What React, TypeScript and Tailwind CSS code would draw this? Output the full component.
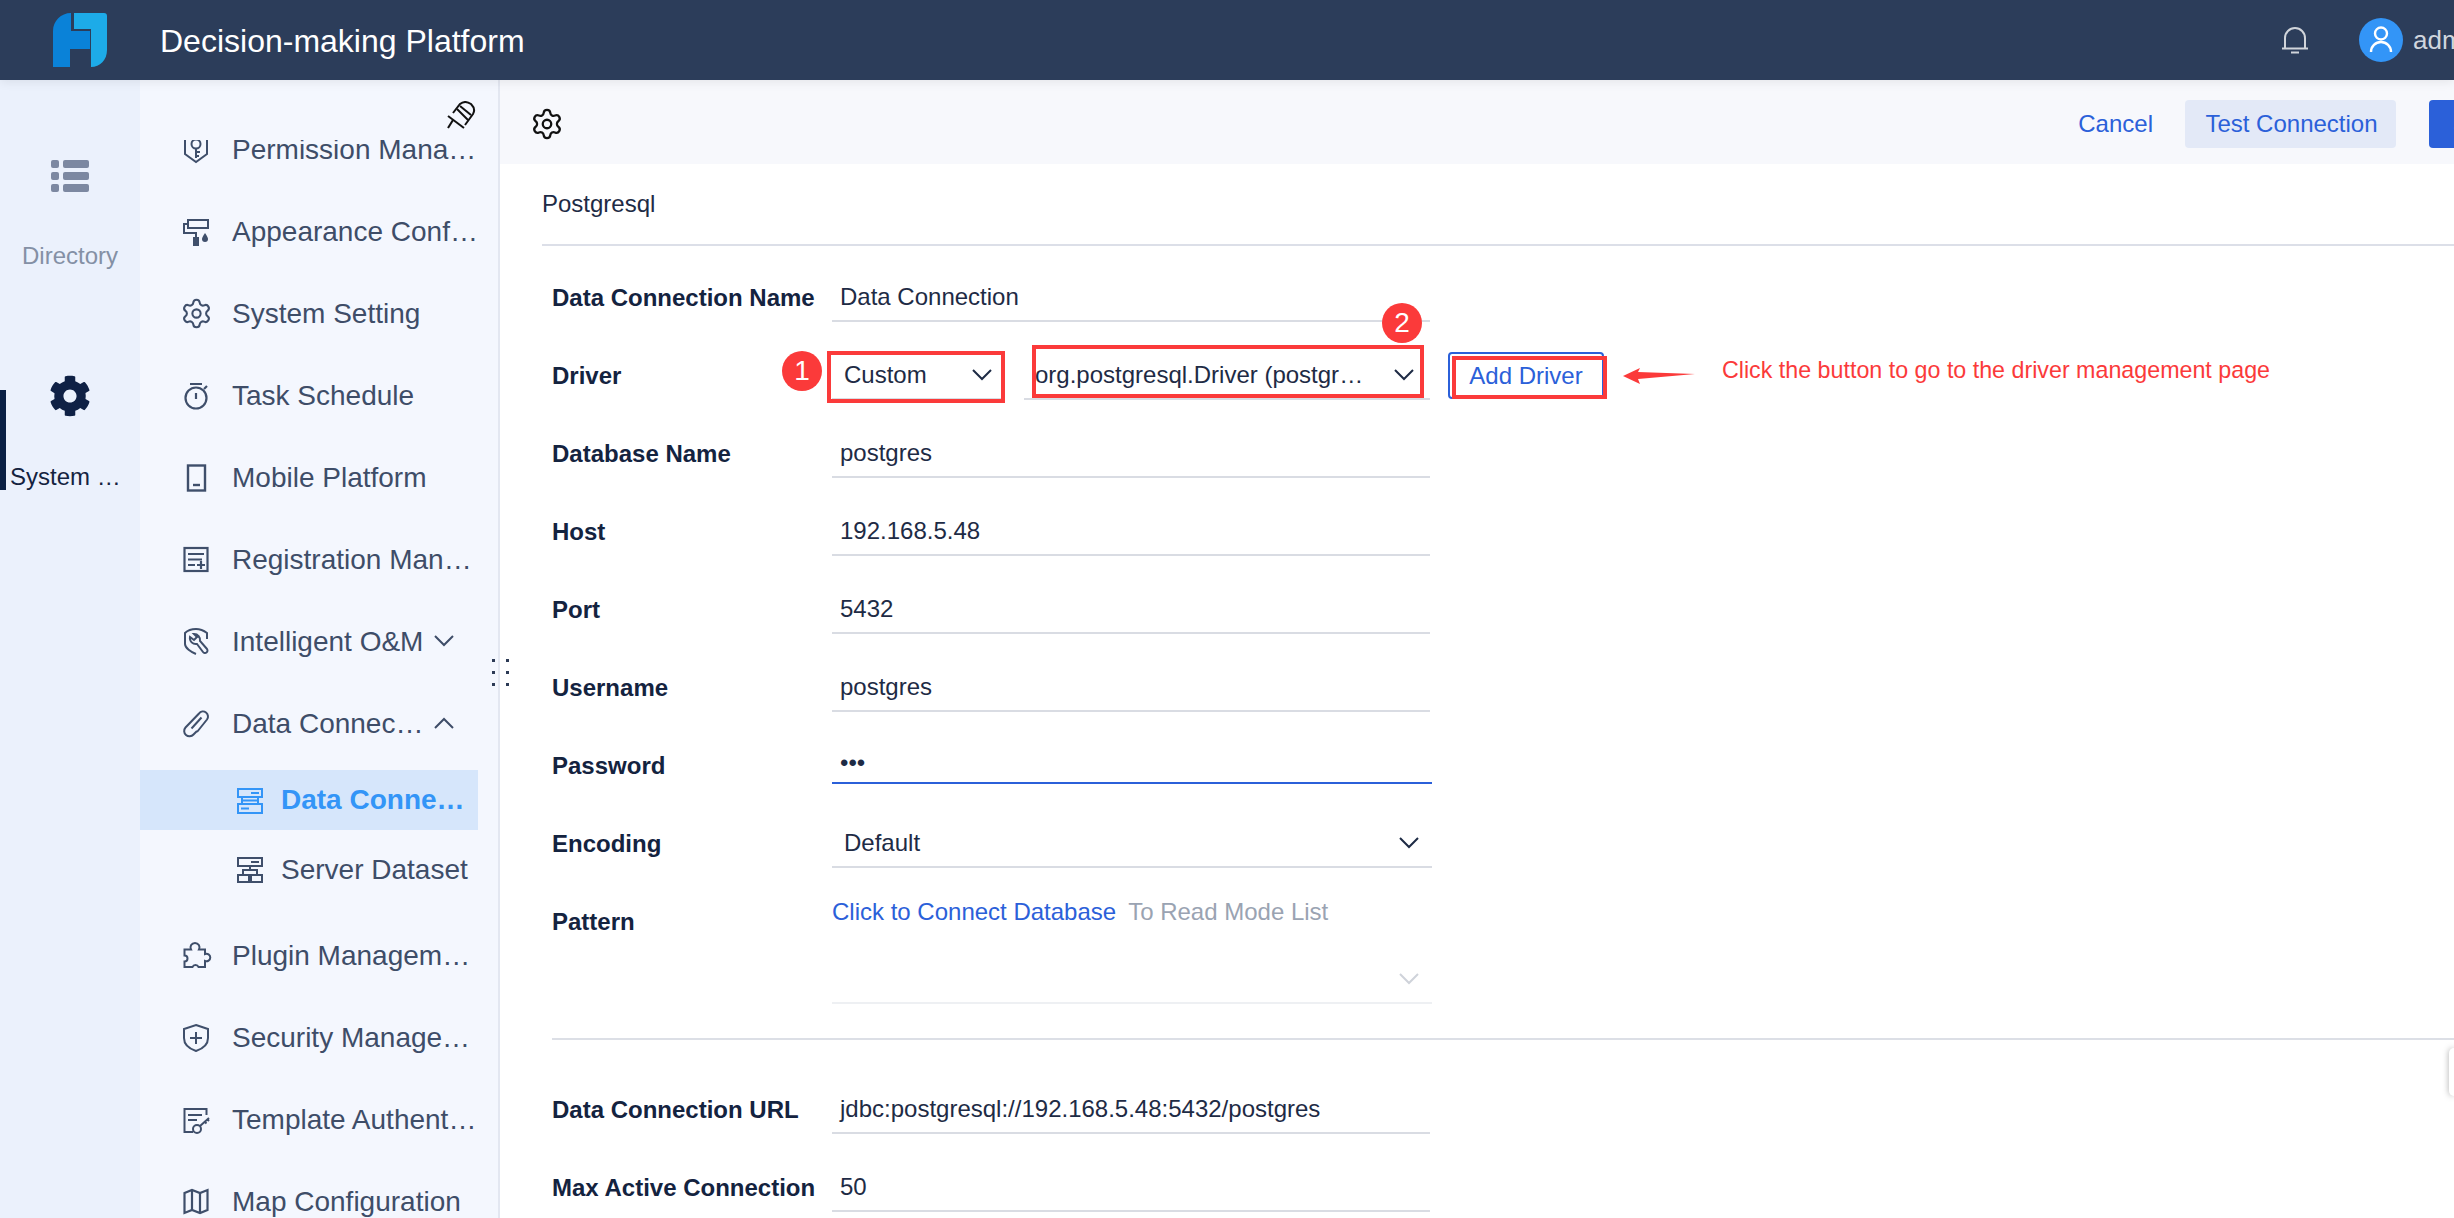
import React from "react";
import { Settings } from "lucide-react";
import { FaCog } from "react-icons/fa";

const S = "#3f4f6b";

const Svg = ({ children, c = S, sw = 2 }: { children: React.ReactNode; c?: string; sw?: number }) => (
  <svg width="26" height="26" viewBox="0 0 26 26" fill="none" stroke={c} strokeWidth={sw} className="shrink-0 overflow-visible">
    {children}
  </svg>
);

const ShieldKey = () => (
  <Svg>
    <path d="M2 0V18L13 26L24 18V0" />
    <circle cx="13" cy="8" r="4.5" />
    <path d="M13 12.5V22M13 16H17M13 20H16" />
  </Svg>
);
const Roller = () => (
  <Svg>
    <rect x="5" y="2" width="20" height="8" />
    <path d="M5 6H1V15H13V19" />
    <rect x="10" y="19" width="6" height="9" fill={S} stroke="none" />
    <path d="M22 15C20 18 19 20 19 21a3 3 0 0 0 6 0c0-1-1-3-3-6z" fill={S} stroke="none" />
  </Svg>
);
const Gear = () => <Settings size={33} color={S} strokeWidth={1.5} className="-mx-[3.5px] shrink-0" />;
const Stopwatch = () => (
  <Svg sw={2.2}>
    <circle cx="13" cy="16" r="10.5" />
    <path d="M7 2H19M21 7L24 4M13 11V17" />
  </Svg>
);
const Phone = () => (
  <Svg sw={2.4}>
    <rect x="5" y="1.5" width="17" height="25" />
    <path d="M10 21H17" />
  </Svg>
);
const RegForm = () => (
  <Svg sw={2.2}>
    <rect x="1.5" y="2" width="23" height="23" />
    <path d="M5 8H21M5 13.5H19M5 19H12M14 19H22M18 15V23" />
  </Svg>
);
const WrenchShield = () => (
  <Svg>
    <path d="M24 11V5C20 2 16 1 13 1C9 1 5 2 2 5V16C2 20 8 24 13 26" />
    <path d="M7 9a6 6 0 0 0 7 7L20 24a2.2 2.2 0 0 0 4-3L17 13a6 6 0 0 0-6-7l3 3-3 3z" />
  </Svg>
);
const Clip = () => (
  <Svg>
    <path d="M14 22L24 9.500a4.800 4.800 0 0 0-8-6L2.500 17.500a5.200 5.200 0 0 0 8 7L14 21" />
    <path d="M8.500 18.500L18.500 7.500" />
  </Svg>
);
const Plug = () => (
  <Svg>
    <path d="M1.500 7.500H8a4.500 4.500 0 1 1 8 0H22V12a3.800 3.800 0 1 1 0 7V25H15.500a3.200 3.200 0 0 0-6 0H1.500V19.500a3 3 0 0 0 0-6Z" />
  </Svg>
);
const ShieldPlus = () => (
  <Svg>
    <path d="M13 1L25 5V14C25 21 19 25 13 27C7 25 1 21 1 14V5Z" />
    <path d="M13 8V20M7 14H19" />
  </Svg>
);
const TemplateKey = () => (
  <Svg>
    <path d="M23.500 9V3H1.500V26H10" />
    <path d="M5 9H19M5 14H14" />
    <circle cx="14" cy="23" r="4" />
    <path d="M17 20L26 12M21.500 15.500L23.500 17.500M24 13L26 15" />
  </Svg>
);
const MapIcon = () => (
  <Svg sw={2.2}>
    <path d="M1.500 5L9 2L17 5L24.500 2V22L17 25L9 22L1.500 25Z" />
    <path d="M9 2V22M17 5V25" />
  </Svg>
);
const ConnIcon = () => (
  <Svg c="#3395f7">
    <rect x="1" y="2" width="24" height="8" />
    <path d="M14 6H22" />
    <path d="M5 10V17M21 10V17" />
    <path d="M5 13.500H21" />
    <rect x="1" y="17" width="24" height="9" />
    <path d="M4 21.500H12" />
  </Svg>
);
const DatasetIcon = () => (
  <Svg>
    <rect x="1" y="2" width="24" height="8" />
    <path d="M14 6H22M13 10V14M6 19V14H20V19" />
    <rect x="1" y="19" width="11" height="7" />
    <rect x="14" y="19" width="11" height="7" />
  </Svg>
);

const Chevron = ({ up = false, c = "#1e2b45" }: { up?: boolean; c?: string }) => (
  <svg width="20" height="12" viewBox="0 0 20 12" fill="none" stroke={c} strokeWidth="2" className="shrink-0">
    <path d={up ? "M1 11L10 2L19 11" : "M1 1L10 10L19 1"} />
  </svg>
);

const MenuRow = ({ icon, text }: { icon: React.ReactNode; text: string }) => (
  <div className="flex h-[82px] items-center gap-[23px] pl-[43px]">
    {icon}
    <span className="w-[246px] truncate pt-[2px] text-[28px] text-[#3e4d68]">{text}</span>
  </div>
);

const PinIcon = () => (
  <svg width="29" height="30" viewBox="0 0 29 30" fill="none" stroke="#111" strokeWidth="2" className="shrink-0">
    <path d="M1 15L17 27" />
    <path d="M6 19L1 27" />
    <path d="M6 12L13 3Q18-1 24 3Q29 8 26 13L18 24" />
    <path d="M13 5L24 14" />
    <path d="M10 8L21 19" />
  </svg>
);

const Sidebar = () => (
  <aside className="flex h-full w-[360px] shrink-0 flex-col border-r-2 border-[#e3e7f1] bg-[#f4f7fe]">
    <div className="flex h-[60px] shrink-0 justify-end pr-[22px] pt-[21px]">
      <PinIcon />
    </div>
    <div className="flex-1 overflow-hidden">
      <div className="-mt-[32px]">
        <MenuRow icon={<ShieldKey />} text="Permission Management" />
        <MenuRow icon={<Roller />} text="Appearance Configuration" />
        <MenuRow icon={<Gear />} text="System Setting" />
        <MenuRow icon={<Stopwatch />} text="Task Schedule" />
        <MenuRow icon={<Phone />} text="Mobile Platform" />
        <MenuRow icon={<RegForm />} text="Registration Management" />
        <div className="flex h-[82px] items-center gap-[23px] pl-[43px]">
          <WrenchShield />
          <span className="w-[192px] truncate pt-[2px] text-[28px] text-[#3e4d68]">Intelligent O&amp;M</span>
          <span className="-ml-[13px]"><Chevron c="#3e4d68" /></span>
        </div>
        <div className="flex h-[82px] items-center gap-[23px] pl-[43px]">
          <Clip />
          <span className="w-[192px] truncate pt-[2px] text-[28px] text-[#3e4d68]">Data Connection</span>
          <span className="-ml-[13px]"><Chevron up c="#3e4d68" /></span>
        </div>
        <div className="mt-[6px] flex h-[60px] w-[338px] items-center gap-[18px] bg-[#d6e6fb] pl-[97px]">
          <ConnIcon />
          <span className="w-[186px] truncate text-[28px] font-bold text-[#3395f7]">Data Connection</span>
        </div>
        <div className="flex h-[78px] items-center gap-[18px] pl-[97px]">
          <DatasetIcon />
          <span className="w-[192px] truncate pt-[2px] text-[28px] text-[#3e4d68]">Server Dataset</span>
        </div>
        <div className="mt-[6px]">
          <MenuRow icon={<Plug />} text="Plugin Management" />
          <MenuRow icon={<ShieldPlus />} text="Security Management" />
          <MenuRow icon={<TemplateKey />} text="Template Authentication" />
          <MenuRow icon={<MapIcon />} text="Map Configuration" />
        </div>
      </div>
    </div>
  </aside>
);

const Rail = () => (
  <aside className="relative flex h-full w-[140px] shrink-0 flex-col items-center bg-[#ebf1fc] pt-[80px]">
    <svg width="38" height="32" viewBox="0 0 38 32" fill="#7c88a1" className="shrink-0">
      <rect x="0" y="0" width="8" height="8" rx="2" />
      <rect x="12" y="0" width="26" height="8" rx="2" />
      <rect x="0" y="12" width="8" height="8" rx="2" />
      <rect x="12" y="12" width="26" height="8" rx="2" />
      <rect x="0" y="24" width="8" height="8" rx="2" />
      <rect x="12" y="24" width="26" height="8" rx="2" />
    </svg>
    <div className="mt-[50px] text-[24px] leading-[28px] text-[#8490a5]">Directory</div>
    <FaCog size={42} color="#0f2145" className="mt-[105px] shrink-0" />
    <div className="ml-[10px] mt-[46px] w-[111px] self-start truncate text-[24px] leading-[28px] text-[#14233f]">System Management</div>
    <div className="absolute left-0 top-[310px] h-[100px] w-[6px] bg-[#0a1f44]" />
  </aside>
);

const Label = ({ children, pad = "pt-[2px]" }: { children: React.ReactNode; pad?: string }) => (
  <div className={`w-[280px] shrink-0 text-[24px] font-bold text-[#14233f] ${pad}`}>{children}</div>
);

const Field = ({ label, value }: { label: string; value: string }) => (
  <div className="mb-[28px] flex h-[50px] items-center">
    <Label>{label}</Label>
    <div className="flex h-[50px] w-[598px] items-center border-b-2 border-[#d9dce3] pl-[8px] pt-[2px] text-[24px] text-[#1e2b45]">{value}</div>
  </div>
);

const Header = () => (
  <header className="relative z-10 flex h-[80px] shrink-0 items-center bg-[#2c3d5a] pl-[53px] shadow-[0_2px_10px_rgba(0,0,0,0.08)]">
    <svg width="56" height="56" viewBox="53 12 56 56" className="shrink-0">
      <path d="M53 31C53 21 61 13 71 13V31H90V49H70V67H53Z" fill="#0a82d8" />
      <path d="M74 13H104Q107 13 107 16V50C107 60 100 67 91 67V29H74Z" fill="#1dabe8" />
    </svg>
    <div className="ml-[51px] pt-[1px] text-[32px] text-white">Decision-making Platform</div>
    <div className="ml-auto flex items-center">
      <svg width="26" height="28" viewBox="0 0 26 28" fill="none" stroke="#d0d4da" strokeWidth="2" className="shrink-0">
        <path d="M3 22V12a10 10 0 0 1 20 0V22" />
        <path d="M0 22.500H26M9 26.500H17" />
      </svg>
      <div className="ml-[51px] flex h-[44px] w-[44px] shrink-0 items-center justify-center rounded-full bg-[#3395f7]">
        <svg width="24" height="28" viewBox="0 0 24 28" fill="none" stroke="#fff" strokeWidth="2.400">
          <circle cx="12" cy="7.500" r="6" />
          <path d="M2 26a10 10 0 0 1 20 0" />
        </svg>
      </div>
      <div className="ml-[10px] w-[41px] overflow-hidden whitespace-nowrap text-[26px] text-[#d0d6de]">admin</div>
    </div>
  </header>
);

const Toolbar = () => (
  <div className="flex h-[84px] shrink-0 items-start bg-[#f7f8fc] pl-[30px] pt-[20px]">
    <div className="flex h-[48px] items-center">
      <Settings size={34} color="#111" strokeWidth={1.6} />
    </div>
    <div className="ml-auto flex items-center text-[24px]">
      <span className="text-[#2b60d9]">Cancel</span>
      <div className="ml-[32px] flex h-[48px] w-[211px] items-center justify-center rounded-[4px] bg-[#e3e9f7] pl-[2px] text-[#2b60d9]">Test Connection</div>
      <div className="ml-[33px] flex h-[48px] w-[25px] items-center overflow-hidden whitespace-nowrap rounded-l-[4px] bg-[#2b60d9] pl-[24px] text-white">Save</div>
    </div>
  </div>
);

const Form = () => (
  <div className="pl-[52px] pt-[26px]">
    <Field label="Data Connection Name" value="Data Connection" />
    <div className="mb-[28px] flex h-[50px] items-center">
      <Label>Driver</Label>
      <div className="flex h-[50px] w-[170px] items-center justify-between border-b-2 border-[#d9dce3] pl-[12px] pr-[10px] pt-[2px] text-[24px] text-[#1e2b45]">
        Custom
        <Chevron />
      </div>
      <div className="ml-[22px] flex h-[50px] w-[406px] items-center justify-between border-b-2 border-[#d9dce3] pl-[11px] pr-[16px] pt-[2px] text-[24px] text-[#1e2b45]">
        <span className="w-[331px] truncate">org.postgresql.Driver (postgresql-42.2.5.jar)</span>
        <Chevron />
      </div>
      <div className="ml-[18px] flex h-[47px] w-[156px] items-center justify-center rounded-[4px] border-2 border-[#2b60d9] pt-[2px] text-[24px] text-[#2b60d9]">Add Driver</div>
    </div>
    <Field label="Database Name" value="postgres" />
    <Field label="Host" value="192.168.5.48" />
    <Field label="Port" value="5432" />
    <Field label="Username" value="postgres" />
    <div className="mb-[34px] flex h-[44px] items-center">
      <Label pad="pt-[8px]">Password</Label>
      <div className="flex h-[44px] w-[600px] items-center border-b-2 border-[#2b60d9] pl-[8px] pt-[4px] text-[24px] text-[#1e2b45]">•••</div>
    </div>
    <div className="mb-[28px] flex h-[50px] items-center">
      <Label>Encoding</Label>
      <div className="flex h-[50px] w-[600px] items-center justify-between border-b-2 border-[#d9dce3] pl-[12px] pr-[13px] pt-[2px] text-[24px] text-[#1e2b45]">
        Default
        <Chevron />
      </div>
    </div>
    <div className="flex h-[108px] items-start">
      <div className="flex h-[50px] items-center">
        <Label>Pattern</Label>
      </div>
      <div className="h-[108px] w-[600px] border-b-2 border-[#eef0f3]">
        <div className="flex h-[31px] items-center text-[24px]">
          <span className="text-[#2b60d9]">Click to Connect Database</span>
          <span className="ml-[12px] text-[#9aa3b2]">To Read Mode List</span>
        </div>
        <div className="mt-[46px] flex justify-end pr-[13px]">
          <Chevron c="#cfd3da" />
        </div>
      </div>
    </div>
    <div className="mb-[44px] mt-[34px] h-[2px] bg-[#dcdfe6]" />
    <Field label="Data Connection URL" value="jdbc:postgresql://192.168.5.48:5432/postgres" />
    <Field label="Max Active Connection" value="50" />
  </div>
);

const Annotations = () => (
  <>
    <div className="absolute left-[827px] top-[351px] h-[52px] w-[178px] border-[4px] border-[#fb3a3a]" />
    <div className="absolute left-[1032px] top-[345px] h-[53px] w-[392px] border-[4px] border-[#fb3a3a]" />
    <div className="absolute left-[1452px] top-[356px] h-[43px] w-[155px] border-[4px] border-[#fb3a3a]" />
    <div className="absolute left-[782px] top-[351px] flex h-[40px] w-[40px] items-center justify-center rounded-full bg-[#fb3a3a] text-[28px] text-white">1</div>
    <div className="absolute left-[1382px] top-[303px] flex h-[40px] w-[40px] items-center justify-center rounded-full bg-[#fb3a3a] text-[28px] text-white">2</div>
    <svg className="absolute left-[1620px] top-[365px]" width="80" height="22" viewBox="1620 365 80 22" fill="#fb3a3a">
      <polygon points="1623,376 1640,368 1638,372 1695,374 1638,379 1640,384" />
    </svg>
    <div className="absolute left-[1722px] top-[356px] whitespace-nowrap text-[23.25px] leading-[28px] text-[#fb3a3a]">Click the button to go to the driver management page</div>
    <div className="absolute left-[492px] top-[659px] grid grid-cols-2 gap-x-[11px] gap-y-[9px]">
      {[0, 1, 2, 3, 4, 5].map((i) => (
        <div key={i} className="h-[3px] w-[3px] bg-[#2c3a55]" />
      ))}
    </div>
    <div className="absolute right-0 top-[1048px] h-[48px] w-[5px] rounded-l-full bg-white shadow-[0_0_6px_rgba(0,0,0,0.35)]" />
  </>
);

export default function App() {
  return (
    <div className="relative flex h-screen w-full flex-col overflow-hidden bg-white font-['Liberation_Sans','Noto_Sans',sans-serif]">
      <Header />
      <div className="flex min-h-0 flex-1">
        <Rail />
        <Sidebar />
        <main className="min-w-0 flex-1 overflow-hidden bg-white">
          <Toolbar />
          <div className="ml-[42px] flex h-[82px] items-center border-b-2 border-[#dcdfe8] text-[24px] text-[#1e2b45]">Postgresql</div>
          <Form />
        </main>
      </div>
      <Annotations />
    </div>
  );
}
